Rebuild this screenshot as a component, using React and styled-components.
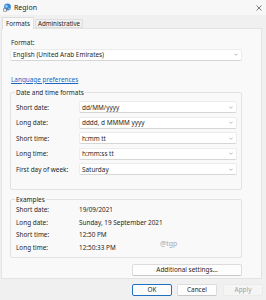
import React from "react";
import styled, { createGlobalStyle } from "styled-components";

const Global = createGlobalStyle`
  html, body { margin: 0; padding: 0; }
  body {
    width: 266px; height: 300px; overflow: hidden;
    background: #f0f0f0;
    font-family: "Noto Sans", "Open Sans", sans-serif;
    font-size: 6.4px;
    color: #1f1f1f;
  }
`;

const Window = styled.div`
  width: 266px;
  height: 300px;
  display: flex;
  flex-direction: column;
  background: #f0f0f0;
`;

const TitleBar = styled.div`
  height: 15px;
  display: flex;
  align-items: center;
  padding: 0 4px 0 3px;
  background: #f7f7f7;
  box-sizing: border-box;
`;

const TitleText = styled.span`
  margin-left: 3px;
  font-size: 7px;
  flex: 1;
`;

const Tabs = styled.div`
  height: 13px;
  display: flex;
  align-items: flex-end;
  padding-left: 2px;
  box-sizing: border-box;
`;

const Tab = styled.div`
  height: ${(p) => (p.$active ? "12px" : "9px")};
  padding: 0 ${(p) => (p.$active ? "3px" : "2px")};
  margin-bottom: ${(p) => (p.$active ? "-1px" : "0")};
  margin-left: ${(p) => (p.$active ? "0" : "1px")};
  display: flex;
  align-items: center;
  background: ${(p) => (p.$active ? "#f9f9f9" : "#f0f0f0")};
  border: 1px solid #dedede;
  border-bottom: ${(p) => (p.$active ? "none" : "1px solid #dedede")};
  border-radius: 1px 1px 0 0;
  position: relative;
  z-index: 1;
  font-size: 6.2px;
  box-sizing: border-box;
`;

const Panel = styled.div`
  margin: 0 4px 0 1px;
  height: 251px;
  box-sizing: border-box;
  background: #f9f9f9;
  border: 1px solid #e3e3e3;
  padding: 8.5px 19px 0 8px;
  display: flex;
  flex-direction: column;
`;

const FieldLabel = styled.div`
  line-height: 9px;
  height: 9px;
  padding-left: 1px;
  margin-bottom: 2px;
`;

const Select = styled.div`
  height: 12px;
  box-sizing: border-box;
  flex: 1;
  display: flex;
  align-items: center;
  justify-content: space-between;
  background: #ffffff;
  border: 1px solid #ececec;
  border-bottom-color: #d6d6d6;
  border-radius: 2px;
  padding: 0 3px 0 2px;
`;

const Link = styled.a`
  margin-top: 14px;
  line-height: 9px;
  padding-left: 1px;
  color: #1a67c4;
  text-decoration: underline;
  text-underline-offset: 1px;
`;

const Group = styled.fieldset`
  margin: ${(p) => p.$top}px 0 0 0;
  padding: ${(p) => p.$pt}px 4px ${(p) => p.$pb}px 5px;
  border: 1px solid #e2e2e2;
  border-radius: 2px;
  position: relative;
  display: flex;
  flex-direction: column;
  gap: ${(p) => p.$gap}px;
  min-width: 0;
`;

const Legend = styled.legend`
  padding: 0 1px;
  margin-left: -1px;
  line-height: 9px;
  font-size: 6.4px;
`;

const Row = styled.div`
  display: flex;
  align-items: center;
  height: ${(p) => p.$h}px;
`;

const RowLabel = styled.span`
  width: 63px;
  flex: none;
`;

const Chevron = () => (
  <svg width="4" height="3" viewBox="0 0 4 3">
    <polyline points="0.3,0.6 2,2.3 3.7,0.6" fill="none" stroke="#8a8a8a" strokeWidth="0.6" />
  </svg>
);

const Watermark = styled.span`
  position: absolute;
  left: 149px;
  top: 35px;
  font-size: 7px;
  color: #a8a8a8;
`;

const ActionRow = styled.div`
  display: flex;
  justify-content: flex-end;
  margin-top: 6px;
`;

const Button = styled.button`
  font: inherit;
  font-size: 6.4px;
  height: 11.5px;
  width: ${(p) => p.$w}px;
  margin-left: ${(p) => p.$ml || 0}px;
  padding: 0;
  box-sizing: border-box;
  background: ${(p) => (p.$disabled ? "#f5f5f5" : "#fdfdfd")};
  color: ${(p) => (p.$disabled ? "#a0a0a0" : "#1f1f1f")};
  border: 1px solid ${(p) => (p.$primary ? "#1f6fc5" : p.$disabled ? "#ebebeb" : "#dcdcdc")};
  border-bottom-color: ${(p) => (p.$primary ? "#1f6fc5" : p.$disabled ? "#ebebeb" : "#c8c8c8")};
  border-radius: 2px;
  display: flex;
  align-items: center;
  justify-content: center;
`;

const Footer = styled.div`
  display: flex;
  justify-content: flex-end;
  gap: 5px;
  padding: 5px 3px 0 0;
`;

const RegionIcon = () => (
  <svg width="8" height="9" viewBox="0 0 8 9">
    <circle cx="4.5" cy="4" r="3.4" fill="#3a86d6" />
    <path d="M2.2 2.2 Q3.5 1.3 4.5 2.4 Q5.6 3.6 4.2 4.4 Q3 5 2.3 4.2 Z" fill="#8fd0f5" />
    <path d="M5.6 4.8 Q6.8 4.6 7 5.6 Q6.3 6.6 5.4 6.2 Z" fill="#8fd0f5" />
    <rect x="0.3" y="5.2" width="3.4" height="3.4" rx="0.5" fill="#6b6b6b" />
    <rect x="0.9" y="5.8" width="2.2" height="2.2" fill="#e8e8e8" />
  </svg>
);

const CloseIcon = () => (
  <svg width="6" height="6" viewBox="0 0 6 6">
    <path d="M0.5 0.5 L5.5 5.5 M5.5 0.5 L0.5 5.5" stroke="#444" strokeWidth="0.7" />
  </svg>
);

const formats = [
  ["Short date:", "dd/MM/yyyy"],
  ["Long date:", "dddd, d MMMM yyyy"],
  ["Short time:", "h:mm tt"],
  ["Long time:", "h:mm:ss tt"],
  ["First day of week:", "Saturday"],
];

const examples = [
  ["Short date:", "19/09/2021"],
  ["Long date:", "Sunday, 19 September 2021"],
  ["Short time:", "12:50 PM"],
  ["Long time:", "12:50:33 PM"],
];

export default function App() {
  return (
    <>
      <Global />
      <Window>
        <TitleBar>
          <RegionIcon />
          <TitleText>Region</TitleText>
          <CloseIcon />
        </TitleBar>
        <Tabs>
          <Tab $active>Formats</Tab>
          <Tab>Administrative</Tab>
        </Tabs>
        <Panel>
          <FieldLabel>Format:</FieldLabel>
          <Row $h={12}>
            <Select>
              <span>English (United Arab Emirates)</span>
              <Chevron />
            </Select>
          </Row>
          <Link>Language preferences</Link>
          <Group $top={4} $pt={4.5} $pb={14} $gap={3.5}>
            <Legend>Date and time formats</Legend>
            {formats.map(([l, v]) => (
              <Row key={l} $h={12}>
                <RowLabel>{l}</RowLabel>
                <Select>
                  <span>{v}</span>
                  <Chevron />
                </Select>
              </Row>
            ))}
          </Group>
          <Group $top={4.5} $pt={0} $pb={3.5} $gap={0}>
            <Legend>Examples</Legend>
            {examples.map(([l, v]) => (
              <Row key={l} $h={12.5}>
                <RowLabel>{l}</RowLabel>
                <span>{v}</span>
              </Row>
            ))}
            <Watermark>@tgp</Watermark>
          </Group>
          <ActionRow>
            <Button $w={110}>Additional settings...</Button>
          </ActionRow>
        </Panel>
        <Footer>
          <Button $w={40} $primary>OK</Button>
          <Button $w={40}>Cancel</Button>
          <Button $w={40} $ml={1} $disabled>Apply</Button>
        </Footer>
      </Window>
    </>
  );
}
